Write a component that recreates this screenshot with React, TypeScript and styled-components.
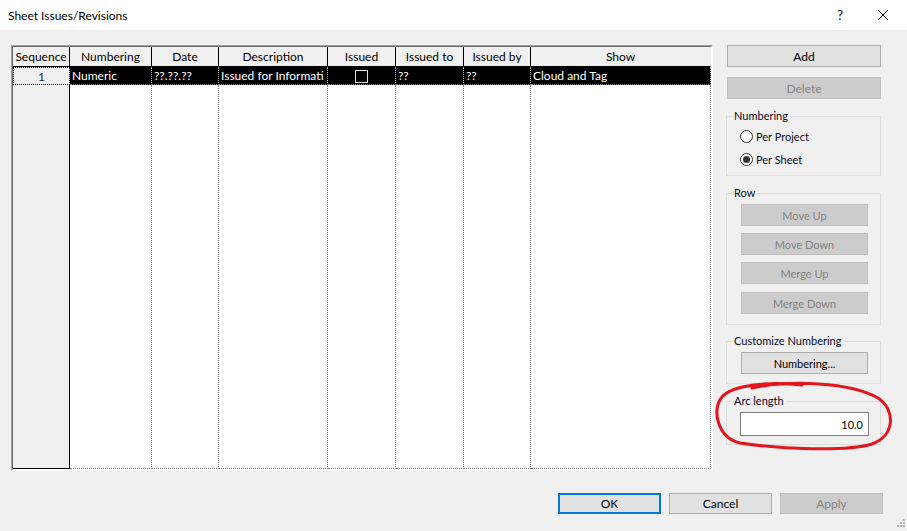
import React from "react";
import styled, { createGlobalStyle, css } from "styled-components";

const GlobalStyle = createGlobalStyle`
    html, body {
        margin: 0;
        padding: 0;
        background: #f0f0f0;
    }
    body {
        font-family: Lato, "Noto Sans", sans-serif;
        font-size: 12px;
        color: #000;
    }
`;

const COLUMNS = "57px 82px 67px 109px 68px 68px 67px 1fr";

const headers = [
    "Sequence",
    "Numbering",
    "Date",
    "Description",
    "Issued",
    "Issued to",
    "Issued by",
    "Show",
];

const rowCells = [
    "Numeric",
    "??.??.??",
    "Issued for Informati",
    null,
    "??",
    "??",
    "Cloud and Tag",
];

export default function App() {
    return (
        <Window>
            <GlobalStyle />
            <TitleBar>
                <Title>Sheet Issues/Revisions</Title>
                <TitleButtons>
                    <HelpMark>?</HelpMark>
                    <svg width="12" height="12" viewBox="0 0 12 12">
                        <path d="M1 1 L11 11 M11 1 L1 11" stroke="#000" strokeWidth="1" />
                    </svg>
                </TitleButtons>
            </TitleBar>

            <Body>
                <Main>
                    <GridFrame>
                        <GridInner>
                            <HeaderRow>
                                {headers.map((h) => (
                                    <HeaderCell key={h}>{h}</HeaderCell>
                                ))}
                            </HeaderRow>
                            <DataRow>
                                <SequenceCell>1</SequenceCell>
                                {rowCells.map((c, i) =>
                                    c === null ? (
                                        <DataCell key={i} $center>
                                            <CheckBox />
                                        </DataCell>
                                    ) : (
                                        <DataCell key={i}>{c}</DataCell>
                                    )
                                )}
                            </DataRow>
                            <FillerRow>
                                <FillerHead />
                                {rowCells.map((_, i) => (
                                    <FillerCell key={i} />
                                ))}
                            </FillerRow>
                        </GridInner>
                    </GridFrame>

                    <SidePanel>
                        <Button $wide>Add</Button>
                        <Button $wide $disabled $gap={10}>
                            Delete
                        </Button>

                        <Group $gap={9} $pad="4px 0 8px 0" $inset={13}>
                            <Legend>Numbering</Legend>
                            <RadioRow>
                                <Radio />
                                Per Project
                            </RadioRow>
                            <RadioRow $gap={7}>
                                <Radio $checked />
                                Per Sheet
                            </RadioRow>
                        </Group>

                        <Group $gap={9} $pad="3px 0 10px 0" $inset={14}>
                            <Legend>Row</Legend>
                            <Button $disabled>Move Up</Button>
                            <Button $disabled $gap={7}>
                                Move Down
                            </Button>
                            <Button $disabled $gap={7}>
                                Merge Up
                            </Button>
                            <Button $disabled $gap={8}>
                                Merge Down
                            </Button>
                        </Group>

                        <Group $gap={8} $pad="3px 0 9px 0" $inset={14}>
                            <Legend>Customize Numbering</Legend>
                            <Button>Numbering...</Button>
                        </Group>

                        <Group $gap={9} $pad="3px 0 8px 0" $inset={13}>
                            <Legend>Arc length</Legend>
                            <NumberInput defaultValue="10.0" />
                        </Group>
                    </SidePanel>
                </Main>

                <Footer>
                    <Button $footer $primary>
                        OK
                    </Button>
                    <Button $footer>Cancel</Button>
                    <Button $footer $disabled>
                        Apply
                    </Button>
                </Footer>
            </Body>

            <Highlight width="907" height="531" viewBox="0 0 907 531">
                <path
                    d="M752 388 C790 380, 850 382, 878 398 C896 410, 895 436, 872 444 C845 452, 780 449, 740 443 C718 438, 711 410, 722 397 C732 385, 770 381, 802 385"
                    fill="none"
                    stroke="#e3161e"
                    strokeWidth="3"
                    strokeLinecap="round"
                />
            </Highlight>

            <Grip width="10" height="10" viewBox="0 0 10 10">
                {[
                    [8, 0],
                    [8, 3],
                    [5, 3],
                    [8, 6],
                    [5, 6],
                    [2, 6],
                ].map(([x, y]) => (
                    <rect key={`${x}-${y}`} x={x} y={y} width="2" height="2" fill="#b8b8b8" />
                ))}
            </Grip>
        </Window>
    );
}

const Window = styled.div`
    position: relative;
    width: 907px;
    height: 531px;
    display: flex;
    flex-direction: column;
    background: #f0f0f0;
    overflow: hidden;
`;

const TitleBar = styled.div`
    height: 30px;
    background: #fff;
    display: flex;
    align-items: center;
    justify-content: space-between;
    padding: 0 18px 0 8px;
`;

const Title = styled.span`
    font-size: 12px;
`;

const TitleButtons = styled.div`
    display: flex;
    align-items: center;
    gap: 34px;
`;

const HelpMark = styled.span`
    font-size: 13px;
`;

const Body = styled.div`
    flex: 1;
    display: flex;
    flex-direction: column;
`;

const Main = styled.div`
    display: flex;
    padding: 15px 0 0 11px;
    gap: 13px;
`;

const GridFrame = styled.div`
    width: 702px;
    height: 426px;
    box-sizing: border-box;
    border: 1px solid;
    border-color: #a0a0a0 #fff #fff #a0a0a0;
`;

const GridInner = styled.div`
    height: 100%;
    box-sizing: border-box;
    border: 1px solid;
    border-color: #696969 #fff #fff #696969;
    background: #fff;
    display: flex;
    flex-direction: column;
`;

const RowBase = styled.div`
    display: grid;
    grid-template-columns: ${COLUMNS};
`;

const HeaderRow = styled(RowBase)`
    height: 20px;
`;

const HeaderCell = styled.div`
    background: #f0f0f0;
    border-right: 1px solid #000;
    border-bottom: 1px solid #000;
    display: flex;
    align-items: center;
    justify-content: center;
    white-space: nowrap;
    overflow: hidden;

    &:last-child {
        border-right-color: #f0f0f0;
    }
`;

const DataRow = styled(RowBase)`
    height: 18px;
`;

const SequenceCell = styled.div`
    background: #f0f0f0;
    border: 1px dotted #000;
    color: #1c1c3c;
    display: flex;
    align-items: center;
    justify-content: center;
`;

const DataCell = styled.div<{ $center?: boolean }>`
    background: #000;
    color: #fff;
    border-right: 1px dotted #a8a8a8;
    border-bottom: 1px dotted #808080;
    padding-left: 2px;
    display: flex;
    align-items: center;
    white-space: nowrap;
    overflow: hidden;
    ${(p) =>
        p.$center &&
        css`
            justify-content: center;
            padding-left: 0;
        `}
`;

const CheckBox = styled.span`
    width: 11px;
    height: 11px;
    border: 1px solid #e0e0e0;
    margin-top: 1px;
`;

const FillerRow = styled(RowBase)`
    height: 384px;
`;

const FillerHead = styled.div`
    background: #f0f0f0;
    border-right: 1px solid #000;
    border-bottom: 1px solid #000;
`;

const FillerCell = styled.div`
    border-right: 1px dotted #808080;
    border-bottom: 1px dotted #808080;
`;

const SidePanel = styled.div`
    width: 155px;
    display: flex;
    flex-direction: column;
    font-size: 11px;
`;

const Button = styled.div<{
    $disabled?: boolean;
    $primary?: boolean;
    $wide?: boolean;
    $footer?: boolean;
    $gap?: number;
}>`
    height: 22px;
    width: 127px;
    box-sizing: border-box;
    margin-top: ${(p) => p.$gap ?? 0}px;
    border: 1px solid #adadad;
    background: #e1e1e1;
    color: #000;
    display: flex;
    align-items: center;
    justify-content: center;
    cursor: default;
    white-space: nowrap;

    ${(p) =>
        p.$wide &&
        css`
            width: 154px;
            margin-left: 1px;
            font-size: 12px;
        `}

    ${(p) =>
        p.$footer &&
        css`
            width: 103px;
            height: 21px;
        `}

    ${(p) =>
        p.$disabled &&
        css`
            background: #cccccc;
            border-color: #bfbfbf;
            color: #838383;
        `}

    ${(p) =>
        p.$primary &&
        css`
            border: 2px solid #0078d7;
        `}
`;

const Group = styled.fieldset<{ $gap: number; $pad: string; $inset: number }>`
    margin: ${(p) => p.$gap}px 0 0 0;
    padding: ${(p) => p.$pad};
    border: 1px solid #dcdcdc;
    min-width: 0;
    display: flex;
    flex-direction: column;

    & > :not(legend) {
        margin-left: ${(p) => p.$inset}px;
    }
`;

const Legend = styled.legend`
    padding: 0 2px;
    margin-left: 5px;
    line-height: 16px;
    color: #0a0a1e;
`;

const RadioRow = styled.div<{ $gap?: number }>`
    display: flex;
    align-items: center;
    gap: 3px;
    height: 16px;
    margin-top: ${(p) => p.$gap ?? 0}px;
    color: #0a0a2a;
`;

const Radio = styled.span<{ $checked?: boolean }>`
    width: 11px;
    height: 11px;
    border: 1px solid #333;
    border-radius: 50%;
    background: #fff;
    display: flex;
    align-items: center;
    justify-content: center;

    &::after {
        content: "";
        width: 7px;
        height: 7px;
        border-radius: 50%;
        background: ${(p) => (p.$checked ? "#333" : "transparent")};
    }
`;

const NumberInput = styled.input`
    width: 129px;
    height: 24px;
    box-sizing: border-box;
    border: 1px solid #7a7a7a;
    background: #fff;
    text-align: right;
    padding: 0 5px;
    font: inherit;
    outline: none;
`;

const Footer = styled.div`
    display: flex;
    justify-content: flex-end;
    gap: 8px;
    padding: 22px 24px 0 0;
`;

const Highlight = styled.svg`
    position: absolute;
    left: 0;
    top: 0;
    pointer-events: none;
`;

const Grip = styled.svg`
    position: absolute;
    right: 2px;
    bottom: 2px;
`;
